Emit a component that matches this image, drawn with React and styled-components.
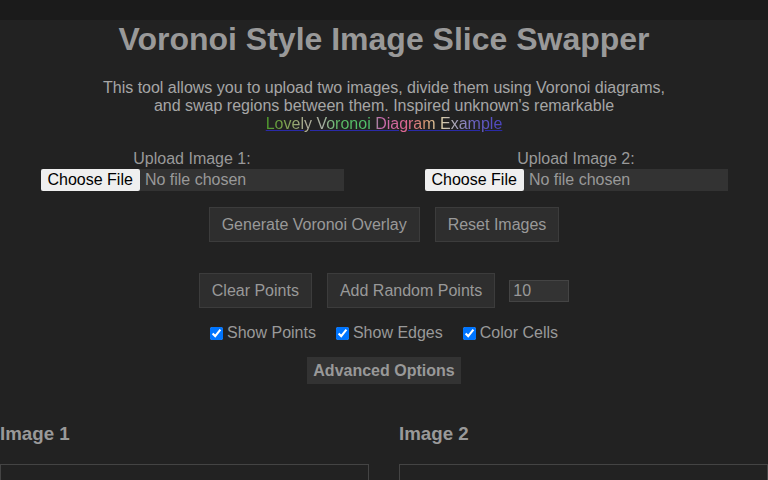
import React from "react";
import styled, { createGlobalStyle } from "styled-components";

const GlobalStyle = createGlobalStyle`
  html, body {
    margin: 0;
    padding: 0;
    background: #222222;
    font-family: "Liberation Sans", Arial, sans-serif;
    color: #999999;
  }
  * { box-sizing: border-box; }
`;

const TopBar = styled.div`
  height: 20px;
  background: #1b1b1b;
`;

const Main = styled.main`
  text-align: center;
`;

const Title = styled.h1`
  margin: 1px 0 21px;
  font-size: 32px;
  line-height: 37px;
  font-weight: bold;
  color: #999999;
`;

const Intro = styled.p`
  margin: 0 0 17px;
  font-size: 16px;
  line-height: 18px;
  color: #a6a6a6;
`;

const RainbowLink = styled.a`
  color: #2a2aa8;
  text-decoration: underline;
  text-decoration-color: #2a2aa8;
  background: linear-gradient(
    90deg,
    #4c9a2c 0%,
    #7ea24e 8%,
    #b0ae98 17%,
    #a8b0a4 24%,
    #5cbc64 31%,
    #4fc26c 44%,
    #c46cb0 48%,
    #e0668e 60%,
    #d89470 67%,
    #e6d6a6 73%,
    #b4b0b8 79%,
    #6c64c4 88%,
    #4a44c0 100%
  );
  -webkit-background-clip: text;
  background-clip: text;
  -webkit-text-fill-color: transparent;
`;

const UploadRow = styled.div`
  display: flex;
`;

const UploadGroup = styled.div`
  flex: 1;
  display: flex;
  flex-direction: column;
  align-items: center;
`;

const UploadLabel = styled.label`
  font-size: 16px;
  line-height: 18px;
  color: #999999;
`;

const FileInput = styled.input`
  margin-top: 1px;
  width: 303px;
  height: 22px;
  background: #333333;
  color: #999999;
  font-family: inherit;
  font-size: 16px;
  line-height: 18px;
  padding: 0;
  border: none;

  &::file-selector-button {
    font-family: inherit;
    font-size: 16px;
    height: 22px;
    background: #efefef;
    color: #000000;
    border: none;
    border-radius: 2px;
    padding: 0 7px;
    margin-right: 5px;
  }
`;

const ButtonRow = styled.div`
  display: flex;
  justify-content: center;
  align-items: center;
  gap: 15px;
  margin-top: ${(p) => p.$top}px;
`;

const Button = styled.button`
  font-family: inherit;
  font-size: 16px;
  line-height: 17px;
  padding: 8px 12px;
  background: #2e2e2e;
  color: #999999;
  border: 1px solid #3c3c3c;
  border-radius: 0;
`;

const NumberInput = styled.input`
  width: 60px;
  height: 22px;
  margin-left: -1px;
  padding: 1px 3px;
  font-family: inherit;
  font-size: 16px;
  line-height: 18px;
  background: #333333;
  color: #999999;
  border: 1px solid #444444;
`;

const CheckRow = styled.div`
  display: flex;
  justify-content: center;
  gap: 20px;
  margin-top: 16px;
`;

const CheckLabel = styled.label`
  display: inline-flex;
  align-items: center;
  font-size: 16px;
  line-height: 18px;
  color: #999999;
`;

const CheckBox = styled.input`
  width: 13px;
  height: 13px;
  margin: 0 4px 0 0;
  accent-color: #0075ff;
`;

const AdvancedButton = styled.button`
  display: block;
  margin: 15px auto 0;
  font-family: inherit;
  font-size: 16px;
  font-weight: bold;
  line-height: 17px;
  padding: 5px 6px;
  background: #333333;
  color: #999999;
  border: none;
`;

const ImagesRow = styled.div`
  display: flex;
  gap: 30px;
  margin-top: 39px;
  text-align: left;
`;

const ImageColumn = styled.section`
  flex: 1;
  min-width: 0;
`;

const ImageTitle = styled.h3`
  margin: 0 0 19px;
  font-size: 18.72px;
  line-height: 22px;
  font-weight: bold;
  color: #999999;
`;

const CanvasBox = styled.div`
  height: 300px;
  border: 1px solid #444444;
  background: #222222;
`;

export default function App() {
  return (
    <>
      <GlobalStyle />
      <TopBar />
      <Main>
        <Title>Voronoi Style Image Slice Swapper</Title>
        <Intro>
          This tool allows you to upload two images, divide them using Voronoi diagrams,
          <br />
          and swap regions between them. Inspired unknown's remarkable
          <br />
          <RainbowLink href="#">Lovely Voronoi Diagram Example</RainbowLink>
        </Intro>

        <UploadRow>
          <UploadGroup>
            <UploadLabel htmlFor="img1">Upload Image 1:</UploadLabel>
            <FileInput id="img1" type="file" accept="image/*" />
          </UploadGroup>
          <UploadGroup>
            <UploadLabel htmlFor="img2">Upload Image 2:</UploadLabel>
            <FileInput id="img2" type="file" accept="image/*" />
          </UploadGroup>
        </UploadRow>

        <ButtonRow $top={16}>
          <Button>Generate Voronoi Overlay</Button>
          <Button>Reset Images</Button>
        </ButtonRow>

        <ButtonRow $top={31}>
          <Button>Clear Points</Button>
          <Button>Add Random Points</Button>
          <NumberInput type="number" defaultValue={10} />
        </ButtonRow>

        <CheckRow>
          <CheckLabel>
            <CheckBox type="checkbox" defaultChecked />
            Show Points
          </CheckLabel>
          <CheckLabel>
            <CheckBox type="checkbox" defaultChecked />
            Show Edges
          </CheckLabel>
          <CheckLabel>
            <CheckBox type="checkbox" defaultChecked />
            Color Cells
          </CheckLabel>
        </CheckRow>

        <AdvancedButton>Advanced Options</AdvancedButton>

        <ImagesRow>
          <ImageColumn>
            <ImageTitle>Image 1</ImageTitle>
            <CanvasBox />
          </ImageColumn>
          <ImageColumn>
            <ImageTitle>Image 2</ImageTitle>
            <CanvasBox />
          </ImageColumn>
        </ImagesRow>
      </Main>
    </>
  );
}
